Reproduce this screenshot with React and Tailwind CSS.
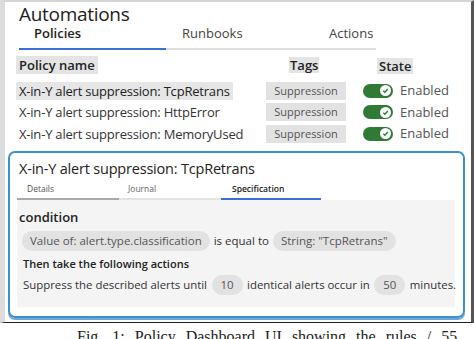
import React from "react";

const font = { fontFamily: '"Open Sans", "Noto Sans", sans-serif' };

const Toggle = () => (
  <div className="w-[30px] h-[14px] rounded-full bg-[#2f7a35] flex items-center justify-end pr-[2px]">
    <div className="w-[11px] h-[11px] rounded-full bg-white flex items-center justify-center">
      <svg width="7" height="7" viewBox="0 0 8 8">
        <path d="M1.5 4.2 L3.3 6 L6.6 2.3" fill="none" stroke="#2f7a35" strokeWidth="1.6" />
      </svg>
    </div>
  </div>
);

const Pill = ({ children, className = "" }) => (
  <span className={"inline-flex items-center h-[20px] rounded-full bg-[#e2e2e2] text-[#555] whitespace-nowrap " + className}>
    {children}
  </span>
);

const rows = [
  { name: "X-in-Y alert suppression: TcpRetrans", active: true },
  { name: "X-in-Y alert suppression: HttpError" },
  { name: "X-in-Y alert suppression: MemoryUsed" },
];

export default function App() {
  return (
    <div className="w-[474px] h-[339px] overflow-hidden bg-white" style={font}>
      <div className="h-[323px] border-t-2 border-t-[#d6d6d6] border-l-[5px] border-l-[#dcdcdc] border-r-[3px] border-r-[#555] border-b border-b-[#222] flex flex-col">
        <div className="pl-[14px] pt-[2px] text-[19px] leading-[20px] text-[#222] tracking-[-0.3px]">Automations</div>
        <div className="ml-[14px] w-[357px] flex text-[13px] leading-[17px] pt-[1px]">
          <div className="w-[147px] pl-[15px] pb-[6px] font-semibold text-[#222] border-b-2 border-[#3b6fd6]">Policies</div>
          <div className="w-[148px] pl-[16px] pb-[6px] text-[#444] border-b-2 border-[#dedede]">Runbooks</div>
          <div className="flex-1 pl-[15px] pb-[6px] text-[#444] border-b-2 border-[#dedede]">Actions</div>
        </div>
        <div className="ml-[11px] mt-[5px] grid grid-cols-[250px_92px_1fr] text-[13px]">
          <div className="h-[19px] flex items-center">
            <span className="bg-[#e4e4e4] px-[3px] font-semibold text-[#222] leading-[18px]">Policy name</span>
          </div>
          <div className="h-[19px] flex items-center pl-[23px]">
            <span className="bg-[#e4e4e4] px-[1px] font-semibold text-[#222] leading-[16px]">Tags</span>
          </div>
          <div className="h-[19px] flex items-center pl-[19px] pt-[3px]">
            <span className="bg-[#e4e4e4] px-[2px] font-semibold text-[#222] leading-[16px]">State</span>
          </div>
          {rows.map((r, i) => (
            <React.Fragment key={r.name}>
              <div className={"h-[21.5px] flex items-center " + (i === 0 ? "mt-[6px]" : "")}>
                <span className={"px-[3px] leading-[18px] tracking-[-0.2px] " + (r.active ? "bg-[#e6e6e6] text-[#222]" : "text-[#333]")}>{r.name}</span>
              </div>
              <div className={"h-[21.5px] flex items-center " + (i === 0 ? "mt-[6px]" : "")}>
                <span className="bg-[#e2e2e2] w-[80px] h-[18px] flex items-center justify-center text-[11px] text-[#555]">Suppression</span>
              </div>
              <div className={"h-[21.5px] flex items-center gap-[7px] pl-[5px] " + (i === 0 ? "mt-[6px]" : "")}>
                <Toggle />
                <span className="text-[#555] text-[13px]">Enabled</span>
              </div>
            </React.Fragment>
          ))}
        </div>
        <div className="ml-[3px] mr-[6px] mt-[6px] h-[167px] rounded-[7px] border-2 border-[#3b8fd3] shadow-[0_2px_0_#6fa8d8] flex flex-col px-[7px]">
          <div className="pl-[2px] pt-[7px] text-[14.5px] leading-[18px] text-[#222] tracking-[-0.2px]">X-in-Y alert suppression: TcpRetrans</div>
          <div className="flex mt-[5px] text-[8.5px] leading-[12px] w-[304px]">
            <div className="w-[102px] pl-[10px] pb-[3px] text-[#555] border-b-2 border-[#aaa]">Details</div>
            <div className="w-[102px] pl-[9px] pb-[3px] text-[#666] border-b-2 border-[#e4e4e4]">Journal</div>
            <div className="flex-1 pl-[11px] pb-[3px] font-semibold text-[#222] border-b-2 border-[#3b6fd6]">Specification</div>
          </div>
          <div className="flex-1 mb-[9px] mr-[1px] bg-[#f4f4f4] flex flex-col pl-[2px] text-[#333]">
            <div className="mt-[9px] text-[13px] leading-[17px] font-semibold text-[#222]">condition</div>
            <div className="mt-[5px] flex items-center text-[11.5px] gap-[3px] whitespace-nowrap">
              <Pill className="px-[8px] ml-[3px]">Value of: alert.type.classification</Pill>
              <span className="text-[#333] px-[1px]">is equal to</span>
              <Pill className="px-[8px]">String: "TcpRetrans"</Pill>
            </div>
            <div className="mt-[5px] ml-[4px] text-[11px] leading-[15px] font-semibold text-[#222]">Then take the following actions</div>
            <div className="mt-[4px] ml-[4px] flex items-center text-[11.4px] gap-[4.5px] text-[#333] whitespace-nowrap">
              <span>Suppress the described alerts until</span>
              <Pill className="px-[9px]">10</Pill>
              <span>identical alerts occur in</span>
              <Pill className="px-[9px]">50</Pill>
              <span>minutes.</span>
            </div>
          </div>
        </div>
      </div>
      <div className="pl-[77px] pt-[5px] text-[16px] leading-[18px] text-[#222] whitespace-nowrap [word-spacing:6px]" style={{ fontFamily: '"Liberation Serif", serif' }}>
        Fig. 1: Policy Dashboard UI showing the rules / 55
      </div>
    </div>
  );
}
